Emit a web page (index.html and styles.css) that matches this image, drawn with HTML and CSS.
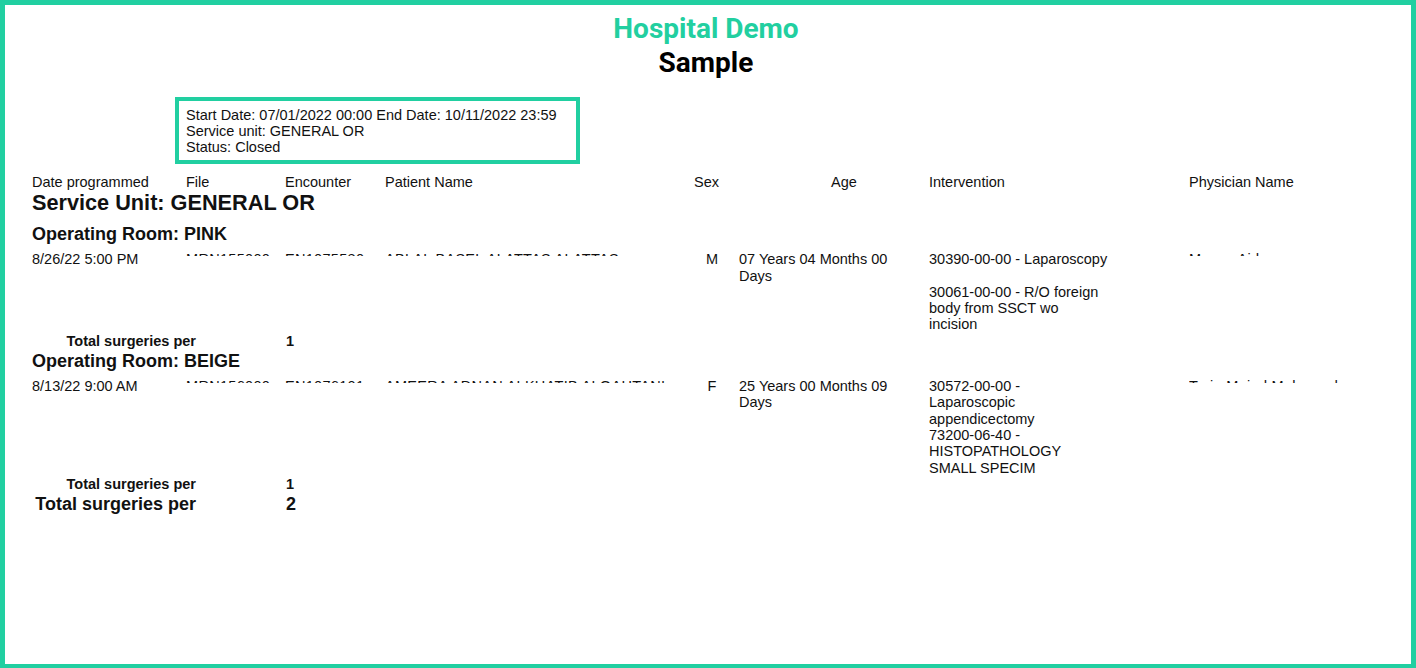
FILE: index.html
```html
<!DOCTYPE html>
<html lang="en">
<head>
<meta charset="utf-8">
<title>Hospital Demo - Sample</title>
<link rel="stylesheet" href="styles.css">
</head>
<body>
<div class="page">
  <header class="title">
    <h1 class="brand">Hospital Demo</h1>
    <h2 class="subtitle">Sample</h2>
  </header>

  <div class="filters">
    <div>Start Date: 07/01/2022 00:00 End Date: 10/11/2022 23:59</div>
    <div>Service unit: GENERAL OR</div>
    <div>Status: Closed</div>
  </div>

  <div class="report">
    <div class="row head">
      <div>Date programmed</div>
      <div>File</div>
      <div>Encounter</div>
      <div>Patient Name</div>
      <div>Sex</div>
      <div class="age-head">Age</div>
      <div>Intervention</div>
      <div>Physician Name</div>
    </div>

    <div class="unit">Service Unit: GENERAL OR</div>

    <div class="room">Operating Room: PINK</div>
    <div class="row data">
      <div>8/26/22 5:00 PM</div>
      <div><span class="redact">MRN155000</span></div>
      <div><span class="redact">EN1075580</span></div>
      <div><span class="redact">ABLAL BASEL ALATTAS ALATTAS</span></div>
      <div class="sex">M</div>
      <div class="age">07 Years 04 Months 00 Days</div>
      <div class="interv">
        <div>30390-00-00 - Laparoscopy</div>
        <div class="gap">30061-00-00 - R/O foreign body from SSCT wo incision</div>
      </div>
      <div><span class="redact">Mazen  Aiden</span></div>
    </div>
    <div class="total">
      <div class="label">Total surgeries per</div>
      <div>1</div>
    </div>

    <div class="room">Operating Room: BEIGE</div>
    <div class="row data">
      <div>8/13/22 9:00 AM</div>
      <div><span class="redact">MRN156000</span></div>
      <div><span class="redact">EN1076101</span></div>
      <div><span class="redact">AMEERA ADNAN ALKHATIB ALQAHTANI</span></div>
      <div class="sex">F</div>
      <div class="age">25 Years 00 Months 09 Days</div>
      <div class="interv">
        <div>30572-00-00 - Laparoscopic appendicectomy</div>
        <div>73200-06-40 - HISTOPATHOLOGY SMALL SPECIM</div>
      </div>
      <div><span class="redact">Tariq Majed Mohamed</span></div>
    </div>
    <div class="total">
      <div class="label">Total surgeries per</div>
      <div>1</div>
    </div>

    <div class="total grand">
      <div class="label">Total surgeries per</div>
      <div>2</div>
    </div>
  </div>
</div>
</body>
</html>
```

FILE: styles.css
```css
html, body {
  margin: 0;
  padding: 0;
  background: #ffffff;
}

.page {
  box-sizing: border-box;
  width: 1416px;
  height: 668px;
  border: 5px solid #21cfa1;
  border-bottom-width: 4px;
  padding: 8px 0 0 0;
  font-family: "Liberation Sans", Arial, sans-serif;
  color: #111;
  overflow: hidden;
}

.title {
  text-align: center;
  padding-right: 4px;
  font-family: Roboto, "Liberation Sans", sans-serif;
  font-weight: 700;
}

.brand {
  margin: 0;
  font-size: 28px;
  line-height: 32px;
  color: #22cfa0;
  font-weight: 700;
}

.subtitle {
  margin: 2px 0 0 0;
  font-size: 28px;
  line-height: 32px;
  color: #000;
  font-weight: 700;
}

.filters {
  box-sizing: border-box;
  width: 405px;
  height: 67px;
  margin: 18px 0 0 170px;
  border: 4px solid #21cfa1;
  padding: 6px 0 0 7px;
  font-size: 14.5px;
  line-height: 16px;
}

.report {
  padding-left: 27px;
  margin-top: 10px;
  font-size: 14.5px;
  line-height: 16.3px;
}

.row {
  display: grid;
  grid-template-columns: 154px 99px 100px 309px 45px 190px 260px 1fr;
}

.age-head {
  padding-left: 92px;
}

.sex {
  width: 36px;
  text-align: center;
}

.age {
  width: 160px;
}

.interv {
  width: 180px;
}

.interv .gap {
  margin-top: 16.3px;
}

.redact {
  display: block;
  height: 5px;
  overflow: hidden;
  white-space: nowrap;
  letter-spacing: 0.3px;
}

.unit {
  font-weight: 700;
  font-size: 21.7px;
  line-height: 24px;
  margin-top: 1px;
}

.room {
  font-weight: 700;
  font-size: 18px;
  line-height: 20px;
  margin-top: 9px;
}

.total + .room {
  margin-top: 2px;
}

.room + .row {
  margin-top: 7px;
}

.total {
  display: grid;
  grid-template-columns: 164px 1fr;
  column-gap: 90px;
  font-weight: 700;
}

.total .label {
  text-align: right;
  white-space: nowrap;
}

.grand {
  font-size: 18px;
  line-height: 20px;
  margin-top: 2px;
}
```
